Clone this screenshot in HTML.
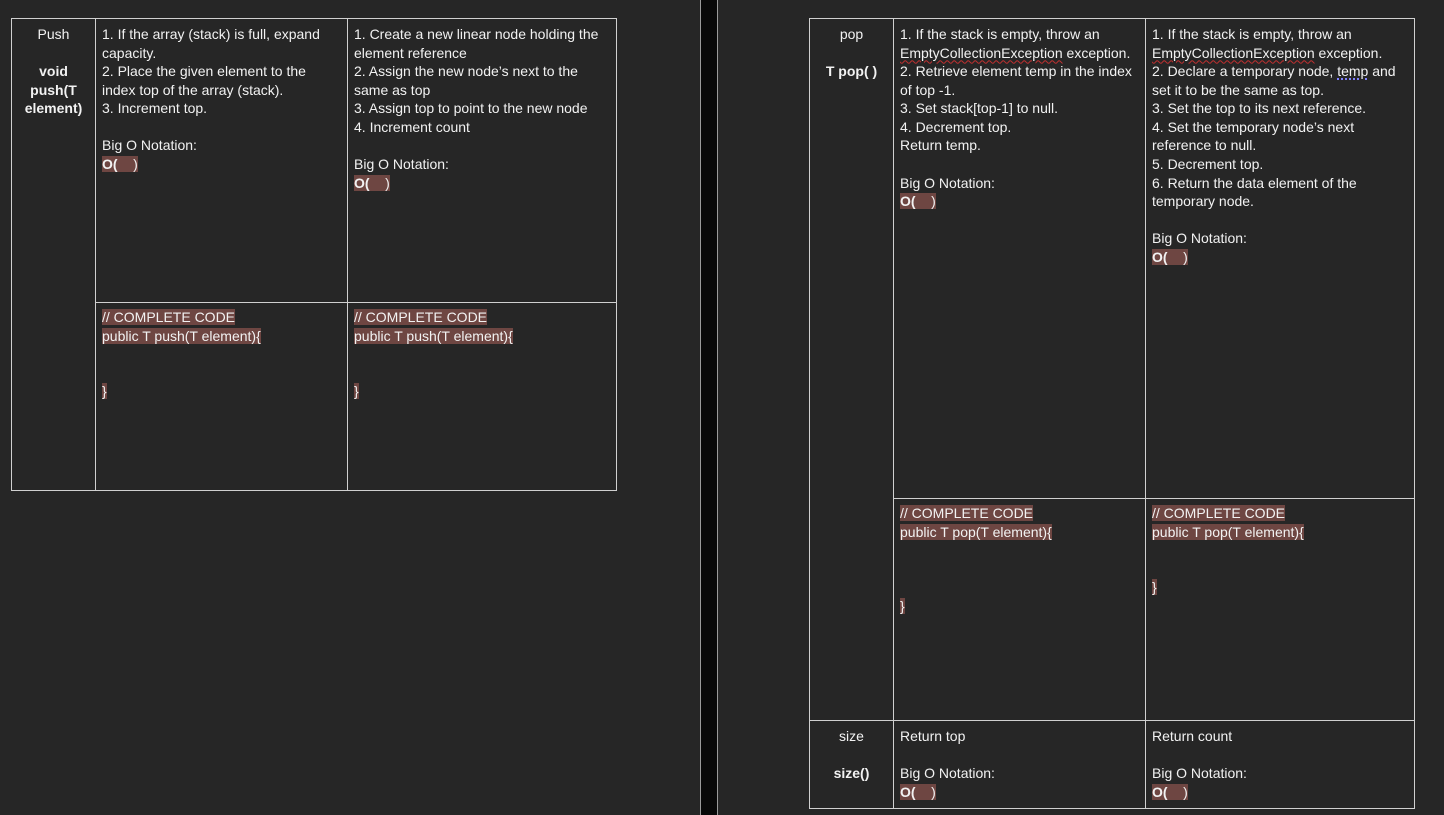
<!DOCTYPE html>
<html><head><meta charset="utf-8"><style>
body{margin:0;width:1444px;height:815px;background:#262626;position:relative;overflow:hidden;font-family:"Liberation Sans",Arial,sans-serif;font-size:14px;color:#f2f2f2}
.b{position:absolute;border:1px solid #d0d0d0;box-sizing:border-box}
.l{position:absolute;background:#d0d0d0}
.t{position:absolute;line-height:18.57px;white-space:nowrap}
.c{text-align:center;font-weight:normal}
.h{background:#6e4642}
.sq{text-decoration:underline wavy #c03030;text-underline-offset:2px;text-decoration-thickness:1px}
.dq{text-decoration:underline dotted #8080ff;text-decoration-thickness:2px;text-underline-offset:2px}
</style></head><body>
<div style="position:absolute;left:700px;top:0;width:1px;height:815px;background:#9a9a9a"></div>
<div style="position:absolute;left:701px;top:0;width:16px;height:815px;background:#080808"></div>
<div style="position:absolute;left:717px;top:0;width:1px;height:815px;background:#9a9a9a"></div>

<!-- left table -->
<div class="b" style="left:11px;top:18px;width:606px;height:473px"></div>
<div class="l" style="left:95px;top:18px;width:1px;height:473px"></div>
<div class="l" style="left:347px;top:18px;width:1px;height:473px"></div>
<div class="l" style="left:95px;top:302px;width:522px;height:1px"></div>

<div class="t" style="left:11px;width:85px;top:25px;text-align:center">Push<br><br><b>void<br>push(T<br>element)</b></div>
<div class="t" style="left:102px;top:25px">1. If the array (stack) is full, expand<br>capacity.<br>2. Place the given element to the<br>index top of the array (stack).<br>3. Increment top.<br><br>Big O Notation:<br><span class="h"><b>O(</b>&nbsp;&nbsp;&nbsp;&nbsp;)</span></div>
<div class="t" style="left:354px;top:25px">1. Create a new linear node holding the<br>element reference<br>2. Assign the new node’s next to the<br>same as top<br>3. Assign top to point to the new node<br>4. Increment count<br><br>Big O Notation:<br><span class="h"><b>O(</b>&nbsp;&nbsp;&nbsp;&nbsp;)</span></div>
<div class="t" style="left:102px;top:308px"><span class="h">// COMPLETE CODE</span><br><span class="h">public T push(T element){</span><br><br><br><span class="h">}</span></div>
<div class="t" style="left:354px;top:308px"><span class="h">// COMPLETE CODE</span><br><span class="h">public T push(T element){</span><br><br><br><span class="h">}</span></div>

<!-- right table -->
<div class="b" style="left:809px;top:18px;width:606px;height:791px"></div>
<div class="l" style="left:893px;top:18px;width:1px;height:791px"></div>
<div class="l" style="left:1145px;top:18px;width:1px;height:791px"></div>
<div class="l" style="left:893px;top:498px;width:522px;height:1px"></div>
<div class="l" style="left:809px;top:720px;width:606px;height:1px"></div>

<div class="t" style="left:809px;width:85px;top:25px;text-align:center">pop<br><br><b>T pop( )</b></div>
<div class="t" style="left:900px;top:25px">1. If the stack is empty, throw an<br><span class="sq">EmptyCollectionException</span> exception.<br>2. Retrieve element temp in the index<br>of top -1.<br>3. Set stack[top-1] to null.<br>4. Decrement top.<br>Return temp.<br><br>Big O Notation:<br><span class="h"><b>O(</b>&nbsp;&nbsp;&nbsp;&nbsp;)</span></div>
<div class="t" style="left:1152px;top:25px">1. If the stack is empty, throw an<br><span class="sq">EmptyCollectionException</span> exception.<br>2. Declare a temporary node, <span class="dq">temp</span> and<br>set it to be the same as top.<br>3. Set the top to its next reference.<br>4. Set the temporary node’s next<br>reference to null.<br>5. Decrement top.<br>6. Return the data element of the<br>temporary node.<br><br>Big O Notation:<br><span class="h"><b>O(</b>&nbsp;&nbsp;&nbsp;&nbsp;)</span></div>
<div class="t" style="left:900px;top:504px"><span class="h">// COMPLETE CODE</span><br><span class="h">public T pop(T element){</span><br><br><br><br><span class="h">}</span></div>
<div class="t" style="left:1152px;top:504px"><span class="h">// COMPLETE CODE</span><br><span class="h">public T pop(T element){</span><br><br><br><span class="h">}</span></div>

<div class="t" style="left:809px;width:85px;top:727px;text-align:center">size<br><br><b>size()</b></div>
<div class="t" style="left:900px;top:727px">Return top<br><br>Big O Notation:<br><span class="h"><b>O(</b>&nbsp;&nbsp;&nbsp;&nbsp;)</span></div>
<div class="t" style="left:1152px;top:727px">Return count<br><br>Big O Notation:<br><span class="h"><b>O(</b>&nbsp;&nbsp;&nbsp;&nbsp;)</span></div>
</body></html>
